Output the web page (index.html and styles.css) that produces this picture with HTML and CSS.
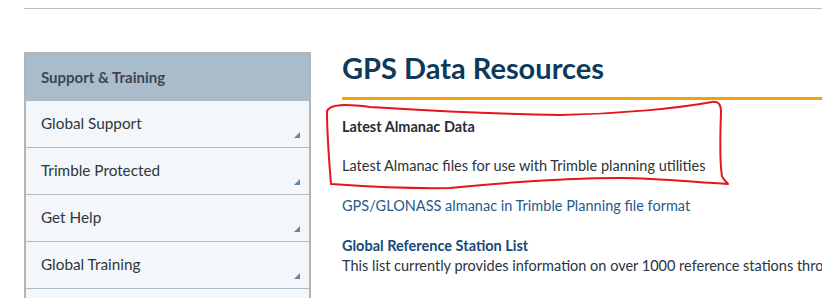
FILE: index.html
```html
<!DOCTYPE html>
<html lang="en">
<head>
    <meta charset="UTF-8">
    <meta name="viewport" content="width=device-width, initial-scale=1.0">
    <title>GPS Data Resources</title>
    <link rel="stylesheet" href="styles.css">
</head>
<body>
    <div class="page">
        <div class="top-rule"></div>
        <div class="layout">
            <aside class="side-nav">
                <div class="side-nav-header">Support &amp; Training</div>
                <a class="side-nav-item" href="#">Global Support</a>
                <a class="side-nav-item" href="#">Trimble Protected</a>
                <a class="side-nav-item" href="#">Get Help</a>
                <a class="side-nav-item" href="#">Global Training</a>
                <a class="side-nav-item" href="#">&nbsp;</a>
            </aside>

            <main class="content">
                <h1 class="page-title">GPS Data Resources</h1>

                <div class="block highlighted">
                    <h2 class="block-title">Latest Almanac Data</h2>
                    <p>Latest Almanac files for use with Trimble planning utilities</p>
                    <!-- hand-drawn marker from the screenshot -->
                    <svg class="marker" width="420" height="100" viewBox="320 98 420 100">
                        <path d="M327 111 C330 104 345 104 370 107 C420 110 480 114 560 115 C620 114 680 108 712 102 C718 101 721 104 721 112 C720 140 720 165 722 176 C723 180 727 182 728 184 C700 183 660 178 620 178 C560 178 500 183 450 188 C400 189 360 186 331 184 C329 160 327 130 327 111 Z"
                              fill="none" stroke="#e8141c" stroke-width="2" stroke-linejoin="round"/>
                    </svg>
                </div>

                <p class="block"><a class="link" href="#">GPS/GLONASS almanac in Trimble Planning file format</a></p>

                <div class="block">
                    <a class="link link-strong" href="#">Global Reference Station List</a>
                    <p>This list currently provides information on over 1000 reference stations throughout the world.</p>
                </div>
            </main>
        </div>
    </div>
</body>
</html>
```

FILE: styles.css
```css
:root {
    --nav-border: #b4b4b4;
    --nav-line: #aabbc9;
    --nav-bg: #f3f7fa;
    --title-color: #0d3a5c;
    --text-color: #2b333c;
    --link-color: #1f5b8c;
    --accent: #f5a200;
}

* {
    box-sizing: border-box;
    margin: 0;
    padding: 0;
}

body {
    font-family: Lato, "Liberation Sans", sans-serif;
    color: var(--text-color);
    background: #ffffff;
    overflow: hidden;
}

.page {
    width: 1100px;
    padding-top: 8px;
    padding-left: 24px;
}

.top-rule {
    border-top: 1px solid #bdbdbd;
}

.layout {
    display: flex;
    gap: 31px;
    margin-top: 43px;
}

.side-nav {
    flex: 0 0 287px;
    border: 2px solid var(--nav-border);
    border-bottom: none;
    background: var(--nav-bg);
}

.side-nav-header {
    height: 47px;
    padding: 14px 15px 0;
    background: var(--nav-line);
    font-size: 15px;
    font-weight: 700;
    color: #3d4650;
    border-bottom: 1px solid var(--nav-line);
}

.side-nav-item {
    position: relative;
    display: block;
    height: 47px;
    padding: 13px 15px 0;
    font-size: 15.3px;
    color: #2e3640;
    text-decoration: none;
    border-bottom: 1px solid var(--nav-line);
}

.side-nav-item::after {
    content: "";
    position: absolute;
    right: 9px;
    bottom: 9px;
    width: 0;
    height: 0;
    border-left: 6px solid transparent;
    border-bottom: 6px solid #5b89b3;
}

.content {
    flex: 1;
}

.page-title {
    font-size: 29px;
    font-weight: 700;
    line-height: 1;
    color: var(--title-color);
    padding-top: 1px;
    padding-bottom: 15px;
    border-bottom: 3px solid var(--accent);
}

.block {
    font-size: 14.5px;
    line-height: 20px;
}

.highlighted {
    position: relative;
    padding-top: 17px;
}

.block-title {
    font-size: 14.5px;
    font-weight: 700;
    line-height: 20px;
    color: #262d35;
    margin-bottom: 19px;
}

.block + .block {
    margin-top: 20px;
}

.link {
    color: var(--link-color);
    text-decoration: none;
}

.link-strong {
    font-weight: 700;
    color: #17487a;
}

.marker {
    position: absolute;
    left: -22px;
    top: -2px;
    pointer-events: none;
}
```
